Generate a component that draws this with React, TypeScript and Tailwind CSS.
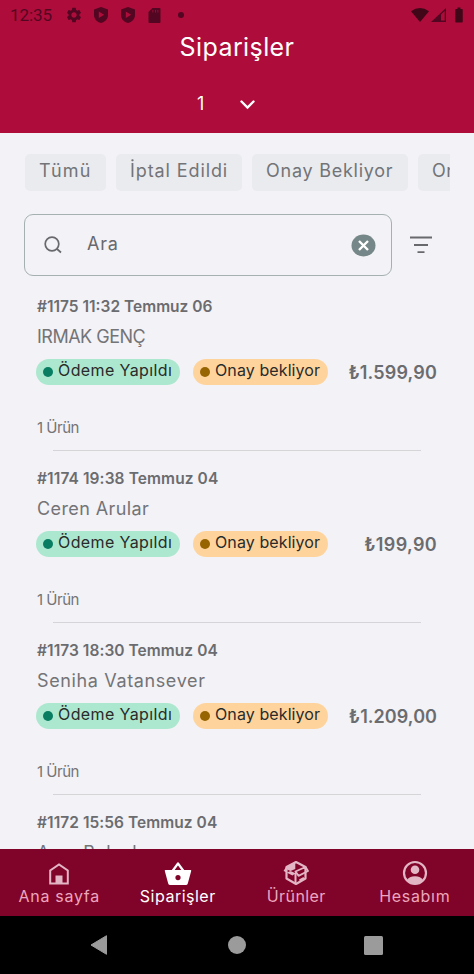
import React from "react";
import { MdSettings, MdBatteryFull } from "react-icons/md";

type Order = { title: string; name: string; price?: string; titleCls: string; nameCls: string; priceCls?: string };

const orders: Order[] = [
  { title: "#1175 11:32 Temmuz 06", name: "IRMAK GENÇ", price: "1.599,90", titleCls: "tracking-[0px]", nameCls: "tracking-[-0.5px]", priceCls: "tracking-[0.15px]" },
  { title: "#1174 19:38 Temmuz 04", name: "Ceren Arular", price: "199,90", titleCls: "tracking-[0.1px]", nameCls: "tracking-[0.4px]", priceCls: "tracking-[0.35px]" },
  { title: "#1173 18:30 Temmuz 04", name: "Seniha Vatansever", price: "1.209,00", titleCls: "tracking-[0.05px]", nameCls: "tracking-[0.63px]", priceCls: "tracking-[0.05px]" },
  { title: "#1172 15:56 Temmuz 04", name: "Arzu Bulanlı", titleCls: "tracking-[0.05px]", nameCls: "tracking-[0.3px]" },
];

function ShieldPlay() {
  return (
    <svg width="14" height="16" viewBox="0 0 14 16">
      <path fillRule="evenodd" fill="#530622" d="M7 0 14 2.6V8c0 4-3 7-7 8-4-1-7-4-7-8V2.6ZM4.8 4.5v6.4l5.4-3.2Z" />
    </svg>
  );
}

function StatusBar() {
  return (
    <div className="flex h-[30px] items-center pl-[10px] pr-[6px] text-[#530622]">
      <span className="w-[54px] pt-[1px] font-[Roboto] text-[17px] tracking-[-0.1px]">12:35</span>
      <MdSettings className="ml-[1px] size-[18px]" />
      <div className="ml-[11px] flex gap-[13px]">
        <ShieldPlay />
        <ShieldPlay />
      </div>
      <svg className="ml-[13px]" width="13" height="15" viewBox="0 0 12 15">
        <path fillRule="evenodd" fill="#530622" d="M4 0h7q1 0 1 1v13q0 1-1 1H1q-1 0-1-1V4ZM4 2v2.500h.8V2ZM6.500 2v2.500h.8V2ZM9 2v2.500h.8V2Z" />
      </svg>
      <span className="ml-[17px] size-[6px] rounded-full bg-[#530622]" />
      <div className="ml-auto flex items-center">
        <svg width="18" height="14" viewBox="0 0 18 14">
          <path fill="#400719" d="M0 3.200Q9-3 18 3.200L9 14Z" />
        </svg>
        <svg className="ml-[2px]" width="15" height="14" viewBox="0 0 15 14">
          <path fillRule="evenodd" fill="#530622" d="M15 0v14H0ZM10 6.500v6h3.700V3Z" />
        </svg>
        <MdBatteryFull className="ml-[4px] size-[18px] text-[#400719]" />
      </div>
    </div>
  );
}

function Badge({ kind }: { kind: "paid" | "waiting" }) {
  const paid = kind === "paid";
  return (
    <div className={`flex h-[26px] items-center rounded-full pl-[7px] ${paid ? "w-[144px] bg-[#ace8cf]" : "w-[135px] bg-[#fed49c]"}`}>
      <span className={`size-[10px] rounded-full ${paid ? "bg-[#087d62]" : "bg-[#966400]"}`} />
      <span className={`ml-[5px] whitespace-nowrap pb-[3px] text-[16px] leading-[23px] text-[#292b2b] ${paid ? "tracking-[0.4px]" : "tracking-[0.1px]"}`}>
        {paid ? "Ödeme Yapıldı" : "Onay bekliyor"}
      </span>
    </div>
  );
}

function OrderRow({ order }: { order: Order }) {
  return (
    <article className="h-[172px] shrink-0 px-[37px] pt-[2px]">
      <h2 className={`h-[28px] whitespace-nowrap text-[15.5px] font-semibold leading-[28px] text-[#6b6c6f] ${order.titleCls}`}>{order.title}</h2>
      <p className={`h-[32px] whitespace-nowrap text-[18px] leading-[32px] text-[#737477] ${order.nameCls}`}>{order.name}</p>
      {order.price && (
        <>
          <div className="-ml-[1px] mt-[6px] flex h-[26px] items-center">
            <Badge kind="paid" />
            <div className="ml-[13px]">
              <Badge kind="waiting" />
            </div>
            <span className={`ml-auto whitespace-nowrap text-[18px] font-semibold text-[#6b6c6f] ${order.priceCls}`}>₺{order.price}</span>
          </div>
          <p className="mt-[31px] h-[24px] text-[15px] leading-[24px] tracking-[-0.5px] text-[#737477]">1 Ürün</p>
          <div className="mx-[16px] mt-[10px] h-px bg-[#d5d5d8]" />
        </>
      )}
    </article>
  );
}

const chips = [
  { label: "Tümü", cls: "w-[81px] tracking-[1.2px]" },
  { label: "İptal Edildi", cls: "w-[126px] tracking-[0.9px]" },
  { label: "Onay Bekliyor", cls: "w-[156px] tracking-[0.75px]" },
  { label: "Onaylandı", cls: "w-[120px] tracking-[0.5px]" },
];

const tabs = [
  {
    label: "Ana sayfa",
    cls: "text-[#eca6bd] tracking-[0.7px]",
    icon: (
      <svg width="24" height="24" viewBox="0 0 24 24">
        <path d="M3.200 21.500V8.500L12 2.500l8.800 6v13Z" fill="none" stroke="#e3b6c5" strokeWidth="2" />
        <path d="M8.500 13.500h7v8h-7z" fill="#e3b6c5" />
      </svg>
    ),
  },
  {
    label: "Siparişler",
    cls: "text-white tracking-[0.5px]",
    icon: (
      <svg width="28" height="24" viewBox="0 0 28 24">
        <path d="m8.500 9 5.500-7.500L19.500 9" fill="none" stroke="white" strokeWidth="2.200" strokeLinejoin="round" />
        <path fillRule="evenodd" d="M1.500 8h25q1 0 .7 1l-3.400 12.500q-.4 1.500-2 1.500H6.200q-1.600 0-2-1.500L.8 9q-.3-1 .7-1ZM14 13a2.600 2.600 0 1 0 0 5.200A2.600 2.600 0 1 0 14 13Z" fill="white" />
      </svg>
    ),
  },
  {
    label: "Ürünler",
    cls: "text-[#eca6bd] tracking-[0.4px]",
    icon: (
      <svg width="26" height="26" viewBox="0 0 26 26">
        <path d="M13 2 3.500 7v11.500L13 24l9.500-5.500V7Z" fill="none" stroke="#e3b6c5" strokeWidth="2.200" strokeLinejoin="round" />
        <path d="M12.300 2 3 7l-2.500 4 3.500 1.500L12.300 9ZM4 9.500l8 3.500 1.500-2v12.500h-2V14L9.500 15.500 4 12.800Z" fill="#e3b6c5" />
        <path d="M12.500 11.500 22.500 7l2.500 4-9.500 4.800Z" fill="none" stroke="#e3b6c5" strokeWidth="1.900" strokeLinejoin="round" />
        <path d="m16.500 20.300 4.500-2.500" stroke="#e3b6c5" strokeWidth="2" />
      </svg>
    ),
  },
  {
    label: "Hesabım",
    cls: "text-[#eca6bd] tracking-[0.7px]",
    icon: (
      <svg width="26" height="26" viewBox="0 0 26 26">
        <circle cx="13" cy="13" r="11" fill="none" stroke="#e3b6c5" strokeWidth="2.200" />
        <circle cx="13" cy="9.800" r="4.300" fill="#e3b6c5" />
        <path d="M5 20q2-3.800 8-3.800t8 3.800q-3 4.200-8 4.200T5 20Z" fill="#e3b6c5" />
      </svg>
    ),
  },
];

export default function App() {
  return (
    <div className="flex h-[974px] w-[474px] flex-col overflow-hidden bg-[#f3f2f6] font-[Inter,'Noto_Sans',sans-serif]">
      <header className="h-[133px] shrink-0 bg-[#ae0c3a] text-white">
        <StatusBar />
        <h1 className="text-center text-[25px] leading-[34px] tracking-[0.4px]">Siparişler</h1>
        <div className="mt-[24px] flex h-[30px] items-center pl-[197px]">
          <span className="w-[43px] text-[18px]">1</span>
          <svg className="mt-[3px]" width="15" height="10" viewBox="0 0 15 10">
            <path d="m1.500 1.500 6 6 6-6" fill="none" stroke="white" strokeWidth="2.400" strokeLinecap="round" />
          </svg>
        </div>
      </header>

      <div className="ml-[25px] mr-[24px] mt-[21px] flex h-[37px] shrink-0 gap-[10px] overflow-hidden">
        {chips.map((c) => (
          <div key={c.label} className={`shrink-0 whitespace-nowrap rounded-[5px] bg-[#eaebef] pl-[14px] text-[18px] leading-[34px] text-[#737477] ${c.cls}`}>
            {c.label}
          </div>
        ))}
      </div>

      <div className="mt-[23px] flex h-[62px] shrink-0 items-center pl-[24px]">
        <div className="flex h-[62px] w-[368px] items-center rounded-[9px] border-[1.500px] border-[#a5b0b2] pl-[19px] pr-[15px]">
          <svg width="18" height="18" viewBox="0 0 18 18" fill="none" stroke="#68696c" strokeWidth="1.700">
            <circle cx="8" cy="8" r="6.800" />
            <path d="m13 13 4 3.500" />
          </svg>
          <span className="ml-[25px] pb-[3px] text-[18px] tracking-[0.8px] text-[#68696c]">Ara</span>
          <svg className="ml-auto" width="25" height="23" viewBox="0 0 25 23">
            <ellipse cx="12.500" cy="11.500" rx="12" ry="11" fill="#758788" />
            <path d="m8 7 9 9M17 7l-9 9" stroke="white" strokeWidth="2.400" />
          </svg>
        </div>
        <svg className="ml-[18px]" width="22" height="18" viewBox="0 0 22 18">
          <path d="M0 1.500h22M4 9h14M7.500 16.200h7" stroke="#68696c" strokeWidth="1.800" />
        </svg>
      </div>

      <main className="flex min-h-0 flex-1 flex-col overflow-hidden pt-[15px]">
        {orders.map((o) => (
          <OrderRow key={o.title} order={o} />
        ))}
      </main>

      <nav className="grid h-[67px] shrink-0 grid-cols-4 bg-[#800329]">
        {tabs.map((t) => (
          <div key={t.label} className="flex flex-col items-center">
            <div className="flex h-[37px] items-end justify-center">{t.icon}</div>
            <span className={`whitespace-nowrap text-[16px] leading-[20px] ${t.cls}`}>{t.label}</span>
          </div>
        ))}
      </nav>

      <div className="flex h-[58px] shrink-0 items-center bg-black pl-[90px]">
        <svg width="18" height="20" viewBox="0 0 18 20">
          <path d="M16.500.7v18.600L1 10Z" fill="#9b9b9b" stroke="#9b9b9b" strokeLinejoin="round" />
        </svg>
        <span className="ml-[120px] size-[18px] rounded-full bg-[#9b9b9b]" />
        <span className="ml-[118px] size-[19px] rounded-[1.500px] bg-[#9b9b9b]" />
      </div>
    </div>
  );
}
